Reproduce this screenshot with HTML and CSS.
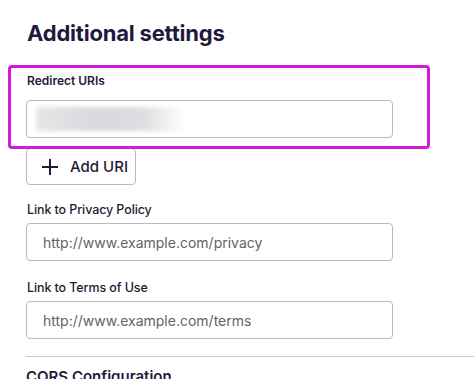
FILE: index.html
```html
<!DOCTYPE html>
<html>
<head>
<meta charset="utf-8">
<link rel="stylesheet" href="styles.css">
</head>
<body>
<div class="page">
  <h1 class="title">Additional settings</h1>
  <section class="redirect">
    <div class="highlight"></div>
    <label class="label label-strong">Redirect URIs</label>
    <div class="input input-blur"><span class="blur"></span></div>
  </section>
  <button class="add-btn">
    <svg class="plus" width="18" height="18" viewBox="0 0 18 18"><path d="M9 1v16M1 9h16" stroke="#1f1a3d" stroke-width="2" fill="none"/></svg>
    <span>Add URI</span>
  </button>
  <div class="field">
    <label class="label">Link to Privacy Policy</label>
    <div class="input"><span class="placeholder">http://www.example.com/privacy</span></div>
  </div>
  <div class="field">
    <label class="label">Link to Terms of Use</label>
    <div class="input"><span class="placeholder">http://www.example.com/terms</span></div>
  </div>
  <hr class="divider">
  <h2 class="subtitle">CORS Configuration</h2>
</div>
</body>
</html>
```
FILE: styles.css
```css
html, body {
  margin: 0;
  padding: 0;
  background: #ffffff;
  overflow: hidden;
}
body {
  font-family: "Inter", "Lato", sans-serif;
  color: #1f1a33;
}
.page {
  padding: 18px 0 0 26px;
}
.title {
  margin: 0;
  font-size: 22px;
  font-weight: 700;
  color: #1f1a3d;
  line-height: 30px;
  letter-spacing: -0.2px;
  padding-left: 1px;
}
.redirect {
  position: relative;
  margin-top: 25px;
  width: 367px;
}
.highlight {
  position: absolute;
  left: -18px;
  top: -8px;
  width: 416px;
  height: 78px;
  border: 3px solid #d41bdc;
  border-radius: 4px;
  pointer-events: none;
}
.label {
  display: block;
  font-size: 12.5px;
  font-weight: 500;
  line-height: 16px;
  color: #1f1a33;
  padding-left: 1px;
  letter-spacing: -0.1px;
}
.label-strong {
  font-size: 12px;
  font-weight: 600;
  letter-spacing: 0;
}
.input {
  box-sizing: border-box;
  width: 367px;
  height: 38px;
  margin-top: 5px;
  border: 1px solid #b9b9bd;
  border-radius: 4px;
  display: flex;
  align-items: center;
  padding-left: 16px;
  background: #fff;
}
.input-blur {
  margin-top: 11px;
  padding-left: 9px;
}
.blur {
  display: block;
  width: 150px;
  height: 24px;
  background: linear-gradient(90deg, #e6e5e8 0%, #d9d8dc 40%, #dddce0 70%, #ffffff 100%);
  filter: blur(2px);
}
.placeholder {
  font-size: 14px;
  color: #636368;
}
.add-btn {
  margin-top: 10px;
  box-sizing: border-box;
  width: 110px;
  height: 37px;
  border: 1px solid #b9b9bd;
  border-radius: 4px;
  background: #fff;
  display: flex;
  align-items: center;
  gap: 11px;
  padding: 0 0 0 14px;
  font-family: inherit;
  font-size: 15px;
  font-weight: 500;
  color: #1f1a33;
}
.plus {
  flex: none;
}
.field {
  margin-top: 17px;
}
.field + .field {
  margin-top: 19px;
}
.divider {
  margin: 17px 0 0 0;
  border: none;
  border-top: 1px solid #c8c8cc;
}
.subtitle {
  margin: 10px 0 0 0;
  font-size: 15px;
  font-weight: 600;
  color: #1f1a3d;
  line-height: 20px;
}
```
